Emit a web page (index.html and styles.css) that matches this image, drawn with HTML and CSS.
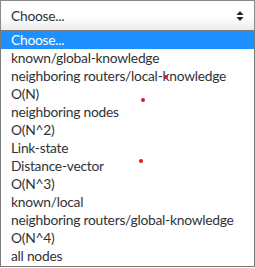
FILE: index.html
```html
<!DOCTYPE html>
<html>
<head>
<meta charset="utf-8">
<title>select</title>
<link rel="stylesheet" href="styles.css">
</head>
<body>
<div class="picker">
  <div class="select">
    <span class="value">Choose...</span>
    <svg class="arrows" width="8" height="12" viewBox="0 0 8 12"><path d="M4 1 L7.5 5 L0.5 5 Z M4 11 L7.5 7 L0.5 7 Z" fill="#222"/></svg>
  </div>
  <ul class="list">
    <li class="on">Choose...</li>
    <li>known/global-knowledge</li>
    <li>neighboring routers/local-knowledge</li>
    <li>O(N)</li>
    <li>neighboring nodes</li>
    <li>O(N^2)</li>
    <li>Link-state</li>
    <li>Distance-vector</li>
    <li>O(N^3)</li>
    <li>known/local</li>
    <li>neighboring routers/global-knowledge</li>
    <li>O(N^4)</li>
    <li>all nodes</li>
  </ul>
  <span class="dot" style="left:164px;top:75px"></span>
  <span class="dot" style="left:141px;top:98px"></span>
  <span class="dot" style="left:139px;top:159px"></span>
</div>
</body>
</html>
```

FILE: styles.css
```css
html, body {
    margin: 0;
    background: #fff;
}
.picker {
    position: relative;
    width: 255px;
    font-family: Lato, "Liberation Sans", sans-serif;
    font-size: 13.8px;
    letter-spacing: -0.25px;
    color: #2f3338;
}
.select {
    height: 30px;
    box-sizing: border-box;
    border: 1px solid #8a8a8a;
    border-bottom: 0;
    background: linear-gradient(#fff 0, #fff 55%, #ececec 100%);
    display: flex;
    align-items: center;
    justify-content: space-between;
    padding: 0 10px 0 10px;
}
.value {
    margin-top: -1px;
}
.list {
    list-style: none;
    margin: 0;
    padding: 0;
    border: 1px solid #7a7a7a;
    height: 237px;
    box-sizing: border-box;
}
.list li {
    height: 18px;
    line-height: 18px;
    padding-left: 10px;
    white-space: nowrap;
}
.list li.on {
    background: #1e90ff;
    color: #fff;
}
.dot {
    position: absolute;
    width: 4px;
    height: 4px;
    border-radius: 50%;
    background: #e8141c;
}
```
